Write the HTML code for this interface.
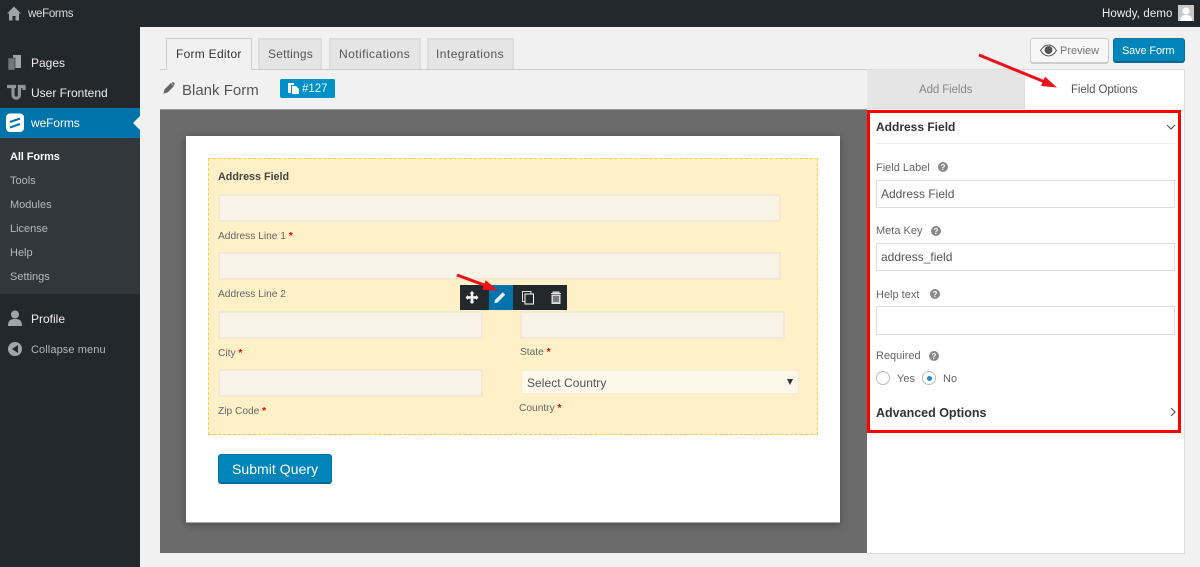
<!DOCTYPE html>
<html><head><meta charset="utf-8">
<style>
html,body{margin:0;padding:0;width:1200px;height:567px;overflow:hidden;background:#f1f1f1}
body{position:relative;font-family:"Liberation Sans",sans-serif;color:#444}
#w{position:absolute;left:0;top:0;width:1200px;height:567px;filter:blur(.3px)}
.b{position:absolute;box-sizing:border-box}
.t{position:absolute;white-space:nowrap;line-height:16px;font-size:12px;letter-spacing:0;color:#555}
.m{font-size:12px;color:#eee}
.s{font-size:11px;color:#b4b9be}
.inp{background:#f8f3e6;border:2px solid #f1e9d3}
.fi{background:#fff;border:1px solid #ddd}
.tab{background:#e5e5e5;border:2px solid #ddd;border-bottom:0}
.l{color:#666;font-size:10.200px;letter-spacing:0}
.p{color:#666;font-size:11px;letter-spacing:0}
.r{color:#e00;font-weight:bold}
</style></head><body><div id="w">
<div class="b" style="left:0;top:0;width:1200px;height:27px;background:#23282d"></div>
<div class="b" style="left:0;top:0;width:140px;height:567px;background:#23282d"></div>
<div class="b" style="left:0;top:108px;width:140px;height:30px;background:#0073aa"></div>
<div class="b" style="left:0;top:138px;width:140px;height:156px;background:#32373c"></div>
<div class="b" style="left:133px;top:116px;border:7px solid transparent;border-left:0;border-right:7px solid #f1f1f1;height:14px;width:7px"></div>

<svg class="b" style="left:0;top:0" width="140" height="360" viewBox="0 0 140 360">
<path d="M14 6.500L7 13.500H9V20.500H12.500V16H15.500V20.500H19V13.500H21Z" fill="#a0a5aa"/>
<path d="M13 55H21V68H13Z" fill="#a0a5aa"/><path d="M8 58H15V70H8Z" fill="#72777c" stroke="#23282d" stroke-width=".6"/>
<path d="M7 86.500H16M13 88V95A3.200 3.200 0 0 0 19.400 95V86.500H24V90" fill="none" stroke="#8f9499" stroke-width="3.200"/>
<rect x="6" y="113.500" width="18" height="18.500" rx="4" fill="#fff"/>
<path d="M10 122L20 118.500M10 127.500L20 124" stroke="#0073aa" stroke-width="2.200"/>
<circle cx="15" cy="314.500" r="4" fill="#a0a5aa"/><path d="M8 326C8 320 11 319 15 319S22 320 22 326Z" fill="#a0a5aa"/>
<circle cx="15" cy="349" r="7" fill="#a0a5aa"/><path d="M18 345V353L12 349Z" fill="#23282d"/>
</svg>

<div class="t" style="left:28px;top:6px;color:#ddd;font-size:11.500px;letter-spacing:-.3px">weForms</div>
<div class="t m" style="left:31px;top:55px">Pages</div>
<div class="t m" style="left:31px;top:85px">User Frontend</div>
<div class="t m" style="left:31px;top:115px;color:#fff;letter-spacing:-.1px">weForms</div>
<div class="t s" style="left:10px;top:149px;color:#fff;font-weight:bold;letter-spacing:-.1px">All Forms</div>
<div class="t s" style="left:10px;top:173px">Tools</div>
<div class="t s" style="left:10px;top:197px">Modules</div>
<div class="t s" style="left:10px;top:221px">License</div>
<div class="t s" style="left:10px;top:245px">Help</div>
<div class="t s" style="left:10px;top:269px">Settings</div>
<div class="t m" style="left:31px;top:311px;font-weight:normal">Profile</div>
<div class="t s" style="left:31px;top:342px;letter-spacing:.1px">Collapse menu</div>

<div class="t" style="left:1102px;top:6px;color:#eee;font-size:11.500px;letter-spacing:.1px">Howdy, demo</div>
<div class="b" style="left:1178px;top:5px;width:16px;height:16px;background:#c8c8c8"></div>
<svg class="b" style="left:1178px;top:5px" width="16" height="16"><circle cx="8" cy="6" r="3.500" fill="#fff"/><path d="M2 16C2 11 5 10 8 10S14 11 14 16Z" fill="#fff"/></svg>

<!-- Tabs -->
<div class="b" style="left:160px;top:69px;width:707px;height:1px;background:#ccc"></div>
<div class="b" style="left:166px;top:38px;width:86px;height:32px;background:#f1f1f1;border:1px solid #ccc;border-bottom:0"></div>
<div class="b tab" style="left:258px;top:38px;width:64px;height:31px"></div>
<div class="b tab" style="left:329px;top:38px;width:92px;height:31px"></div>
<div class="b tab" style="left:427px;top:38px;width:87px;height:31px"></div>
<div class="t" style="left:176px;top:46px;color:#333;letter-spacing:.27px">Form Editor</div>
<div class="t" style="left:268px;top:46px;letter-spacing:.2px">Settings</div>
<div class="t" style="left:339px;top:46px;letter-spacing:.45px">Notifications</div>
<div class="t" style="left:436px;top:46px;letter-spacing:.45px">Integrations</div>

<svg class="b" style="left:162px;top:81px" width="14" height="14"><path d="M2 12L3 8.500L9 2.500L11.500 5L5.500 11Z" fill="#666" stroke="#666" stroke-width=".8"/><path d="M9.800 2L11 .8L13 2.800L12 4.200Z" fill="#666"/></svg>
<div class="t" style="left:182px;top:83px;font-size:15px;color:#555">Blank Form</div>
<div class="b" style="left:280px;top:79px;width:55px;height:19px;background:#0090c8;border-radius:2px"></div>
<svg class="b" style="left:287px;top:82px" width="14" height="14"><path d="M1 1H7V3H4V11H1Z" fill="#fff"/><path d="M5 4H9L12 7V12H5Z" fill="#fff"/></svg>
<div class="t" style="left:302px;top:81px;color:#eaf6fb;font-size:11.500px">#127</div>

<!-- Buttons -->
<div class="b" style="left:1030px;top:38px;width:79px;height:25px;background:#f7f7f7;border:1px solid #ccc;border-radius:3px;box-shadow:0 1px 0 #ccc"></div>
<svg class="b" style="left:1040px;top:44px" width="17" height="13"><path d="M.5 6.500C3 2.500 5.500 1 8.500 1S14 2.500 16.500 6.500C14 10.500 11.500 12 8.500 12S3 10.500 .5 6.500Z" fill="#fff" stroke="#555"/><circle cx="8.500" cy="6" r="4" fill="#555"/></svg>
<div class="t" style="left:1060px;top:43px;color:#777;font-size:11px">Preview</div>
<div class="b" style="left:1113px;top:38px;width:72px;height:25px;background:#0085ba;border:1px solid #0073aa;border-bottom:2px solid #006799;border-radius:3px"></div>
<div class="t" style="left:1122px;top:43px;color:#fff;font-size:11px;letter-spacing:-.15px">Save Form</div>

<!-- Canvas -->
<div class="b" style="left:160px;top:109px;width:707px;height:444px;background:#6b6b6b;border-top:1px solid #999"></div>
<div class="b" style="left:186px;top:136px;width:654px;height:387px;background:#fff;border-bottom:1px solid #aaa;box-shadow:0 2px 8px rgba(0,0,0,.3)"></div>
<div class="b" style="left:208px;top:158px;width:610px;height:277px;background:#fff0c8;border:1px dashed #ffcd4d"></div>

<div class="t" style="left:218px;top:169px;color:#444;font-weight:bold;font-size:10.750px">Address Field</div>
<div class="b inp" style="left:218px;top:194px;width:563px;height:28px"></div>
<div class="t l" style="left:218px;top:229px">Address Line 1 <span class="r">*</span></div>
<div class="b inp" style="left:218px;top:252px;width:563px;height:28px"></div>
<div class="t l" style="left:218px;top:287px">Address Line 2</div>
<div class="b inp" style="left:218px;top:311px;width:265px;height:28px"></div>
<div class="b inp" style="left:520px;top:311px;width:265px;height:28px"></div>
<div class="t l" style="left:218px;top:346px">City <span class="r">*</span></div>
<div class="t l" style="left:520px;top:345px">State <span class="r">*</span></div>
<div class="b inp" style="left:218px;top:369px;width:265px;height:28px"></div>
<div class="b" style="left:521px;top:370px;width:278px;height:24px;background:#fdf8e9;border:1px solid #f5ecd2;border-radius:2px"></div>
<div class="t" style="left:527px;top:375px;font-size:12px;letter-spacing:.05px;color:#555">Select Country</div>
<div class="b" style="left:787px;top:379px;border-top:6px solid #333;border-left:3px solid transparent;border-right:3px solid transparent"></div>
<div class="t l" style="left:218px;top:404px">Zip Code <span class="r">*</span></div>
<div class="t l" style="left:519px;top:401px">Country <span class="r">*</span></div>

<div class="b" style="left:218px;top:454px;width:114px;height:30px;background:#0085ba;border:1px solid #0073aa;border-bottom:2px solid #006799;border-radius:3px"></div>
<div class="t" style="left:232px;top:461px;color:#fff;font-size:14px;letter-spacing:.05px">Submit Query</div>

<!-- Toolbar -->
<div class="b" style="left:460px;top:285px;width:107px;height:25px;background:#23282d"></div>
<div class="b" style="left:489px;top:285px;width:24px;height:25px;background:#0073aa"></div>
<svg class="b" style="left:460px;top:285px" width="107" height="25">
<path d="M12 7.500V17.500M7 12.500H17" stroke="#fff" stroke-width="2.500"/><path d="M12 6L9.500 8.500H14.500ZM12 19L9.500 16.500H14.500ZM5.500 12.500L8 10V15ZM18.500 12.500L16 10V15Z" fill="#fff"/>
<path d="M36 16.500L44 8.500" stroke="#e4f2f8" stroke-width="3.600"/><path d="M34.300 18.300L35 15L37.500 17.500Z" fill="#e4f2f8"/>
<rect x="62.500" y="6.500" width="8.500" height="10" fill="none" stroke="#ddd"/><rect x="65" y="9" width="8.500" height="10" fill="#23282d" stroke="#fff"/>
<path d="M91 8.500H101M93 8.500V7H99V8.500M92 10V18.500H100V10Z" fill="#ccc" stroke="#ddd"/><path d="M94 11V17M96 11V17M98 11V17" stroke="#23282d"/>
</svg>

<!-- Right panel -->
<div class="b" style="left:867px;top:69px;width:318px;height:485px;background:#fff;border:1px solid #ddd;border-left:0"></div>
<div class="b" style="left:867px;top:70px;width:158px;height:39px;background:#e5e5e5;border-right:1px solid #ddd;border-bottom:1px solid #ddd"></div>
<div class="t" style="left:919px;top:82px;color:#888;font-size:11.500px;letter-spacing:-.1px">Add Fields</div>
<div class="t" style="left:1071px;top:82px;color:#555;font-size:11.500px;letter-spacing:-.1px">Field Options</div>

<div class="t" style="left:876px;top:119px;color:#333;font-weight:bold;font-size:12px">Address Field</div>
<div class="b" style="left:876px;top:143px;width:299px;height:1px;background:#eee"></div>
<svg class="b" style="left:1166px;top:122px" width="10" height="10"><path d="M1 3L5 7L9 3" fill="none" stroke="#555" stroke-width="1.200"/></svg>

<div class="t p" style="left:876px;top:160px">Field Label</div>
<div class="b fi" style="left:876px;top:180px;width:299px;height:28px"></div>
<div class="t" style="left:881px;top:186px">Address Field</div>
<div class="t p" style="left:876px;top:223px">Meta Key</div>
<div class="b fi" style="left:876px;top:243px;width:299px;height:28px"></div>
<div class="t" style="left:881px;top:249px">address_field</div>
<div class="t p" style="left:876px;top:287px">Help text</div>
<div class="b fi" style="left:876px;top:306px;width:299px;height:29px"></div>
<div class="t p" style="left:876px;top:348px">Required</div>
<svg class="b" style="left:930px;top:155px;overflow:visible" width="20" height="220" font-family="Liberation Sans" font-size="8" font-weight="bold" text-anchor="middle">
<circle cx="13" cy="12" r="5" fill="#888"/><text x="13" y="15" fill="#fff">?</text>
<circle cx="6" cy="76" r="5" fill="#888"/><text x="6" y="79" fill="#fff">?</text>
<circle cx="5" cy="139" r="5" fill="#888"/><text x="5" y="142" fill="#fff">?</text>
<circle cx="4" cy="201" r="5" fill="#888"/><text x="4" y="204" fill="#fff">?</text>
</svg>
<div class="b" style="left:876px;top:371px;width:14px;height:14px;border-radius:50%;background:#fff;border:1px solid #bbb"></div>
<div class="t p" style="left:897px;top:371px">Yes</div>
<div class="b" style="left:922px;top:371px;width:14px;height:14px;border-radius:50%;background:#fff;border:1px solid #bbb"></div>
<div class="b" style="left:926.500px;top:375.500px;width:5px;height:5px;border-radius:50%;background:#1e8cbe"></div>
<div class="t p" style="left:943px;top:371px">No</div>
<div class="t" style="left:876px;top:405px;color:#333;font-weight:bold;font-size:12.500px">Advanced Options</div>
<svg class="b" style="left:1168px;top:407px" width="10" height="10"><path d="M3 1L7 5L3 9" fill="none" stroke="#555" stroke-width="1.200"/></svg>

<div class="b" style="left:867px;top:110px;width:314px;height:323px;border:3px solid #f00"></div>

<svg class="b" style="left:0;top:0" width="1200" height="567">
<path d="M979 55L1045 82" stroke="#f0101a" stroke-width="3"/><path d="M1057 87.500L1041 86L1045 76.600Z" fill="#f0101a"/>
<path d="M457 275L486 285.700" stroke="#f0101a" stroke-width="3"/><path d="M498 290.500L482.300 289.700L485.700 280.300Z" fill="#f0101a"/>
</svg>
</div></body></html>
